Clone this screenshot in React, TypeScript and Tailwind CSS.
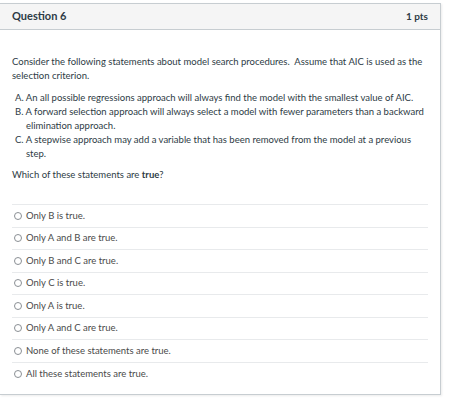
const options = [
  "Only B is true.",
  "Only A and B are true.",
  "Only B and C are true.",
  "Only C is true.",
  "Only A is true.",
  "Only A and C are true.",
  "None of these statements are true.",
  "All these statements are true.",
];

const App = () => {
  return (
    <div
      className="w-[474px] h-[405px] bg-white pt-[3px] text-[#2d3b45]"
      style={{ fontFamily: "Lato, 'Open Sans', sans-serif" }}
    >
      <div className="w-[441px] h-[392px] border border-l-0 border-[#c7cdd1] shadow-[1px_1px_2px_rgba(0,0,0,0.08)] bg-white">
        <div className="h-[26px] flex items-center justify-between px-[12px] bg-[#f5f5f5] border-b border-[#c7cdd1]">
          <span className="text-[11px] font-bold">Question 6</span>
          <span className="text-[10px] font-bold">1 pts</span>
        </div>

        <div className="px-[12px] pt-[25px] text-[9.5px] leading-[14px]">
          <p>
            Consider the following statements about model search procedures.&nbsp; Assume that AIC is used as the
            selection criterion.
          </p>
          <div className="mt-[8px]">
            <p className="pl-[14px] -indent-[11px]">
              A. An all possible regressions approach will always find the model with the smallest value of AIC.
            </p>
            <p className="pl-[14px] -indent-[11px]">
              B. A forward selection approach will always select a model with fewer parameters than a backward
              elimination approach.
            </p>
            <p className="pl-[14px] -indent-[11px]">
              C. A stepwise approach may add a variable that has been removed from the model at a previous step.
            </p>
          </div>
          <p className="mt-[7px]">
            Which of these statements are <strong>true</strong>?
          </p>
        </div>

        <div className="mx-[12px] mt-[22px] border-t border-[#e8eaec]">
          {options.map((opt, i) => (
            <label
              key={opt}
              className={`flex items-center h-[22.5px] gap-[4px] pl-[2px] text-[9.5px] text-[#4a4a4a] ${
                i < options.length - 1 ? "border-b border-[#e8eaec]" : ""
              }`}
            >
              <span className="w-[8px] h-[8px] rounded-full border border-[#8a8f94] bg-white" />
              {opt}
            </label>
          ))}
        </div>
      </div>
    </div>
  );
};

export default App;
